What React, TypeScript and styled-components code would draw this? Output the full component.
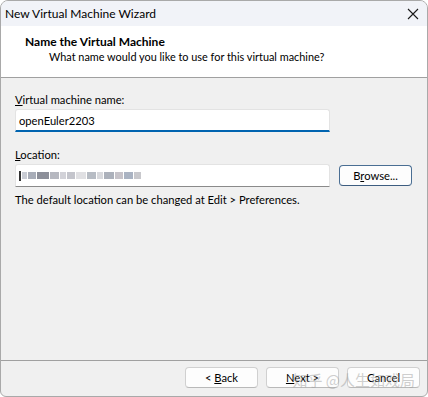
import React from 'react';
import styled, {createGlobalStyle} from 'styled-components';

const Global = createGlobalStyle`
  html, body {
    margin: 0;
    padding: 0;
    background: #ffffff;
  }
  * { box-sizing: border-box; }
`

const Window = styled.div`
  width: 428px;
  height: 397px;
  display: flex;
  flex-direction: column;
  border: 1px solid #a9a9a9;
  border-radius: 8px 8px 6px 6px;
  overflow: hidden;
  background: #f0f0f0;
  font-family: Lato, "Liberation Sans", sans-serif;
  font-size: 11.2px;
  line-height: 15px;
  color: #000;
  position: relative;
`

const TitleBar = styled.div`
  height: 25px;
  display: flex;
  align-items: center;
  justify-content: space-between;
  padding: 0 8px 0 4px;
  background: #f1f3f8;
  font-size: 12px;
`

const Header = styled.div`
  height: 52px;
  background: #ffffff;
  border-bottom: 1px solid #a0a0a0;
  padding: 8px 0 0 24px;
  display: flex;
  flex-direction: column;
`

const HeaderTitle = styled.div`
  font-weight: 700;
  font-size: 12px;
`

const HeaderSub = styled.div`
  padding-left: 24px;
  font-size: 10.9px;
`

const Body = styled.div`
  flex: 1;
  padding: 14px 14px 0 14px;
  display: flex;
  flex-direction: column;
`

const Label = styled.div<{top?: number}>`
  margin-top: ${p => p.top || 0}px;
  margin-bottom: 2px;
  & u { text-decoration-thickness: 1px; }
`

const Row = styled.div`
  display: flex;
  align-items: center;
  gap: 9px;
`

const Field = styled.div<{focused?: boolean}>`
  width: 315px;
  height: 23px;
  background: #ffffff;
  border: 1px solid #e3e3e3;
  border-bottom: ${p => p.focused ? '2px solid #0064b0' : '1px solid #8a8a8a'};
  border-radius: 3px 3px 0 0;
  padding: 0 3px;
  display: flex;
  align-items: center;
`

const Smudges = styled.div`
  display: flex;
  align-items: center;
  gap: 1px;
  filter: blur(0.6px);
`

const Smudge = styled.span<{w: number; c: string; h?: number}>`
  display: inline-block;
  width: ${p => p.w}px;
  height: ${p => p.h || 7}px;
  background: ${p => p.c};
`

const Button = styled.button<{primary?: boolean}>`
  height: 21px;
  width: 73px;
  font: inherit;
  color: #000;
  background: #fdfdfd;
  border: 1px solid ${p => p.primary ? '#4a6e93' : '#d0d0d0'};
  border-bottom-color: ${p => p.primary ? '#3d5d80' : '#b9b9b9'};
  border-radius: 4px;
  padding: 0;
  & u { text-decoration-thickness: 1px; }
`

const Note = styled.div`
  margin-top: 5px;
`

const Footer = styled.div`
  height: 36px;
  border-top: 1px solid #a0a0a0;
  display: flex;
  align-items: center;
  justify-content: flex-end;
  gap: 8px;
  padding: 0 7px 2px 0;
`

const Watermark = styled.div`
  position: absolute;
  right: 12px;
  bottom: 9px;
  font-family: "Noto Sans CJK SC", sans-serif;
  font-size: 15px;
  color: rgba(160, 160, 160, 0.5);
  pointer-events: none;
`

const smudges = [
  {w: 2, c: '#333', h: 10},
  {w: 5, c: '#c9ccd4'},
  {w: 8, c: '#a8adb8'},
  {w: 12, c: '#8c8f99'},
  {w: 9, c: '#b6b8c0'},
  {w: 6, c: '#d2d2d8'},
  {w: 8, c: '#c4c5cc'},
  {w: 10, c: '#e0e0e3'},
  {w: 9, c: '#b7bcc4'},
  {w: 6, c: '#d8d9dd'},
  {w: 10, c: '#acb1bb'},
  {w: 8, c: '#c6c3c9'},
  {w: 9, c: '#aab3c2'},
  {w: 7, c: '#c8c8cc'},
]

function CloseIcon() {
  return (
    <svg width="12" height="12" viewBox="0 0 12 12">
      <path d="M1 1 L11 11 M11 1 L1 11" stroke="#1a1a1a" strokeWidth="1.1" />
    </svg>
  )
}

export default function App() {
  return (
    <Window>
      <Global/>
      <TitleBar>
        <span>New Virtual Machine Wizard</span>
        <CloseIcon/>
      </TitleBar>
      <Header>
        <HeaderTitle>Name the Virtual Machine</HeaderTitle>
        <HeaderSub>What name would you like to use for this virtual machine?</HeaderSub>
      </Header>
      <Body>
        <Label><u>V</u>irtual machine name:</Label>
        <Field focused>openEuler2203</Field>
        <Label top={15}><u>L</u>ocation:</Label>
        <Row>
          <Field>
            <Smudges>
              {smudges.map((s, i) => <Smudge key={i} w={s.w} c={s.c} h={s.h}/>)}
            </Smudges>
          </Field>
          <Button primary>B<u>r</u>owse...</Button>
        </Row>
        <Note>The default location can be changed at Edit &gt; Preferences.</Note>
      </Body>
      <Footer>
        <Button>&lt; <u>B</u>ack</Button>
        <Button><u>N</u>ext &gt;</Button>
        <Button>Cancel</Button>
      </Footer>
      <Watermark>知乎 @人生如戏局</Watermark>
    </Window>
  )
}
